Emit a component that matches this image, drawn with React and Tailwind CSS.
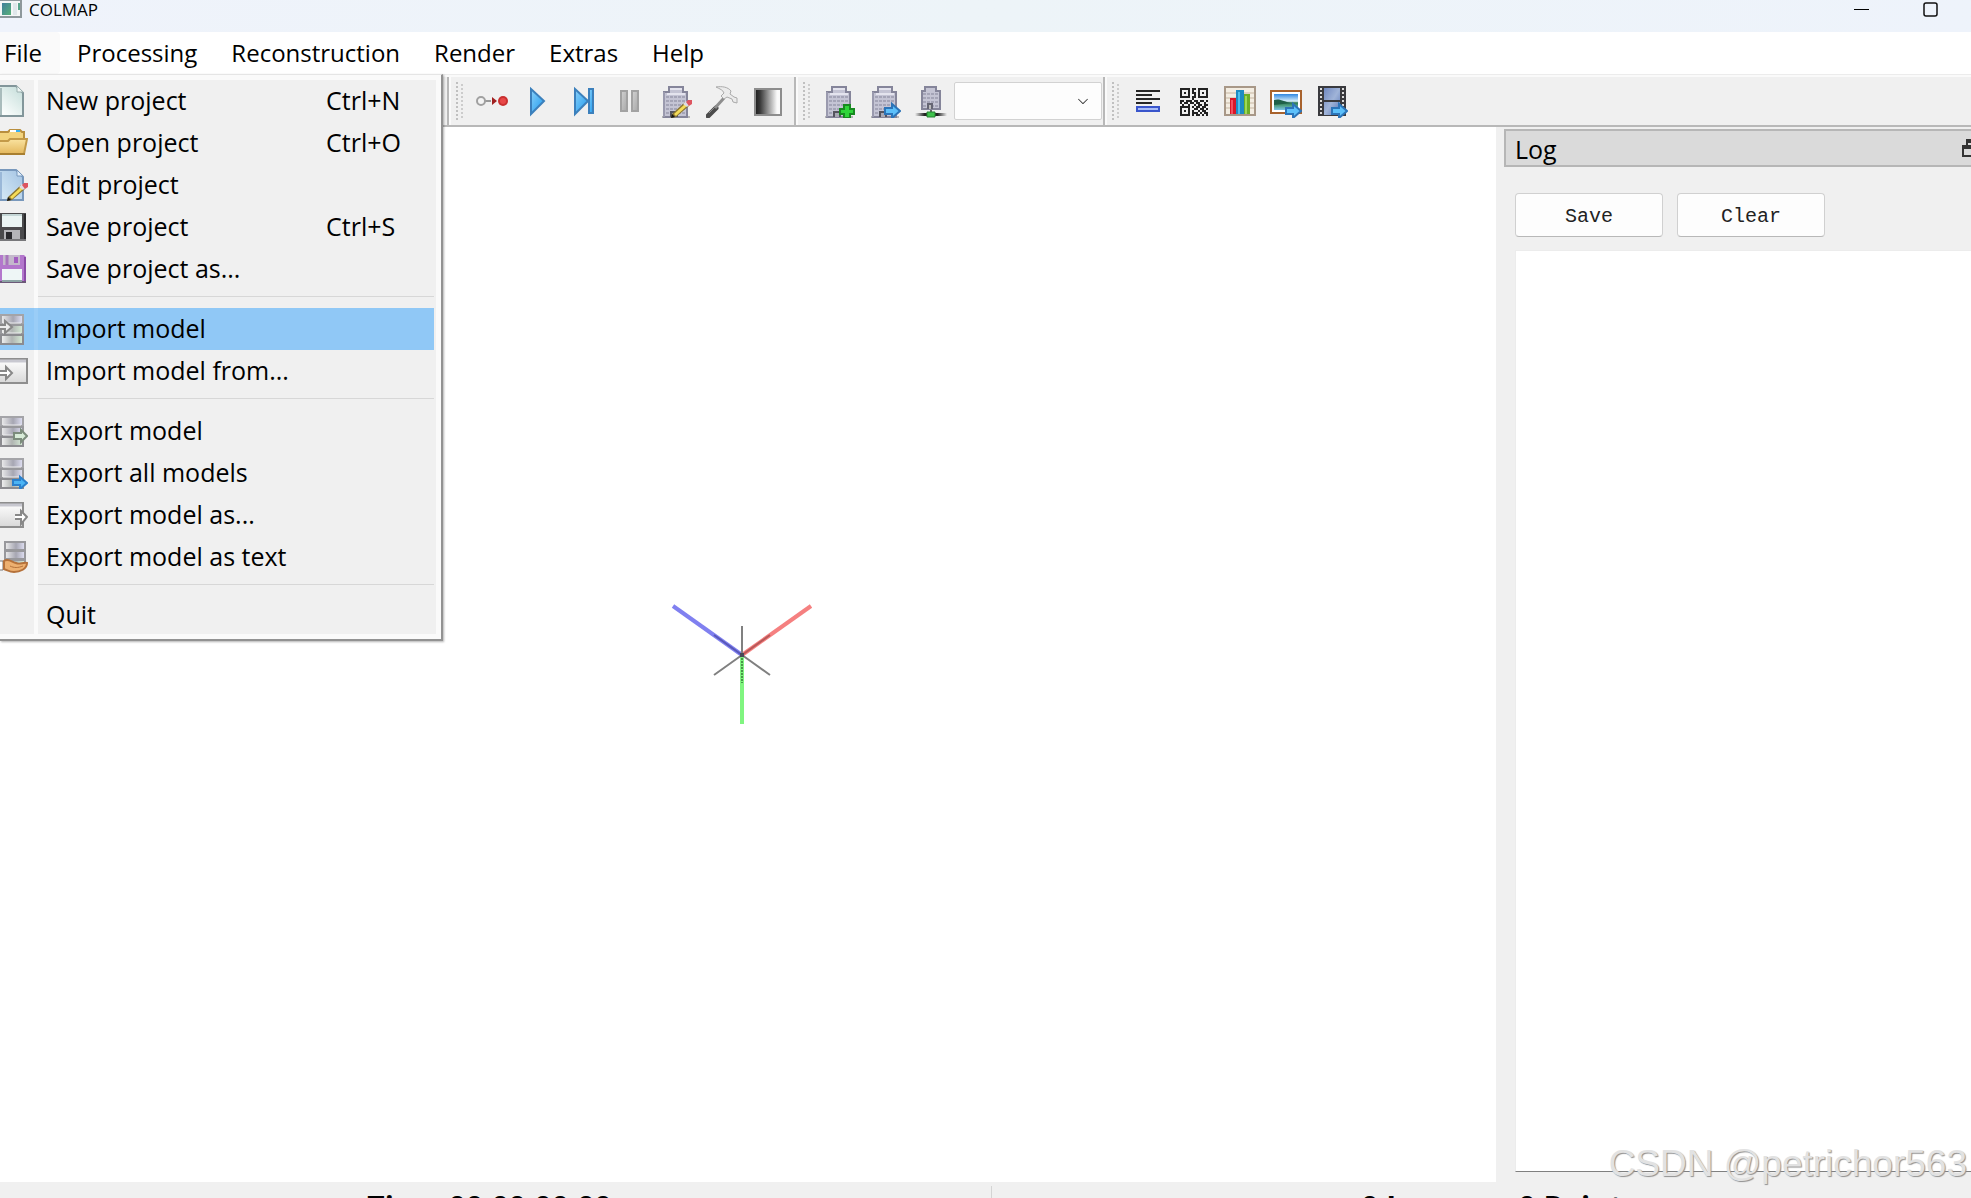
import { Fragment } from "react";
import { VscChevronDown } from "react-icons/vsc";

function Gradients() {
    return (
        <svg className="absolute h-0 w-0" aria-hidden="true">
            <defs>
                <linearGradient id="paper" x1="1" y1="0" x2="0.3" y2="1">
                    <stop offset="0" stopColor="#c2dcd8" />
                    <stop offset="1" stopColor="#fafdfc" />
                </linearGradient>
                <linearGradient id="bluePaper" x1="1" y1="0" x2="0" y2="1">
                    <stop offset="0" stopColor="#a3c3e3" />
                    <stop offset="1" stopColor="#d6eaf6" />
                </linearGradient>
                <linearGradient id="folder" x1="0" y1="0" x2="0" y2="1">
                    <stop offset="0" stopColor="#fae3a0" />
                    <stop offset="1" stopColor="#e3b75c" />
                </linearGradient>
                <linearGradient id="blueFill" x1="0" y1="0" x2="1" y2="1">
                    <stop offset="0" stopColor="#8ad0f8" />
                    <stop offset="1" stopColor="#1d9af0" />
                </linearGradient>
                <linearGradient id="drawer" x1="0" y1="0" x2="1" y2="0">
                    <stop offset="0" stopColor="#eeeeee" />
                    <stop offset="0.55" stopColor="#a6a6b2" />
                    <stop offset="1" stopColor="#e2e2f6" />
                </linearGradient>
                <linearGradient id="drawerGreen" x1="0" y1="0" x2="1" y2="0">
                    <stop offset="0" stopColor="#f4f4f4" />
                    <stop offset="0.5" stopColor="#b0b4b2" />
                    <stop offset="1" stopColor="#d6ecd6" />
                </linearGradient>
                <linearGradient id="windowFill" x1="0" y1="0" x2="0" y2="1">
                    <stop offset="0" stopColor="#ffffff" />
                    <stop offset="1" stopColor="#d8d8d8" />
                </linearGradient>
                <linearGradient id="gray" x1="0" y1="0" x2="1" y2="0">
                    <stop offset="0" stopColor="#1c1c1c" />
                    <stop offset="0.2" stopColor="#3a3a3a" />
                    <stop offset="0.85" stopColor="#fafafa" />
                </linearGradient>
                <linearGradient id="pauseFill" x1="0" y1="0" x2="1" y2="1">
                    <stop offset="0" stopColor="#d2d2d2" />
                    <stop offset="1" stopColor="#a8a8a8" />
                </linearGradient>
                <linearGradient id="sky" x1="0" y1="0" x2="0" y2="1">
                    <stop offset="0" stopColor="#2f86e0" />
                    <stop offset="0.45" stopColor="#d8effa" />
                    <stop offset="0.55" stopColor="#2d7a55" />
                    <stop offset="0.7" stopColor="#4a9a78" />
                    <stop offset="1" stopColor="#7cc4e8" />
                </linearGradient>
                <linearGradient id="film" x1="0" y1="0" x2="1" y2="1">
                    <stop offset="0" stopColor="#7088c0" />
                    <stop offset="0.5" stopColor="#a0b4d8" />
                    <stop offset="1" stopColor="#5674b8" />
                </linearGradient>
                <linearGradient id="shadowLine" x1="0" y1="0" x2="1" y2="0">
                    <stop offset="0" stopColor="#222" stopOpacity="0" />
                    <stop offset="0.3" stopColor="#222" />
                    <stop offset="0.7" stopColor="#222" />
                    <stop offset="1" stopColor="#222" stopOpacity="0" />
                </linearGradient>
                <linearGradient id="appTile" x1="0" y1="0" x2="1" y2="1">
                    <stop offset="0" stopColor="#3f7f9c" />
                    <stop offset="1" stopColor="#58b078" />
                </linearGradient>
            </defs>
        </svg>
    );
}

function Pencil() {
    return (
        <g>
            <path d="M12 28 L25 16 L29 20 L16 31 L11 32 Z" fill="#8a7430" />
            <path d="M14 28 L25 18 L27 20 L16 30 Z" fill="#f5dc58" />
            <path d="M23 18 L26 15 L30 18 L27 21 Z" fill="#dcdce4" />
            <path d="M26 16 L28 14 L32 14 L32 18 L29 20 Z" fill="#dd5560" />
            <path d="M11 32 L12 28 L15 31 Z" fill="#151515" />
        </g>
    );
}

function BlueArrow() {
    return (
        <path
            d="M16 22 H23 V18 L31 25 L23 32 V28 H16 Z"
            fill="#5cc0fa"
            stroke="#2b74b8"
            strokeWidth="2"
        />
    );
}

function Building() {
    return (
        <g>
            <path d="M2 31 H30" stroke="#b5b5b5" strokeWidth="2" />
            <path d="M9 1 H23 V6 H27 V31 H4 V6 H9 Z" fill="#c4c4d4" stroke="#85859a" strokeWidth="2" />
            <path d="M10 3 H22 M7 8 H25" stroke="#e4e4ee" strokeWidth="2" />
            <path
                d="M6 11 H26 M6 15 H26 M6 19 H26 M6 23 H26 M6 27 H26"
                stroke="#85859a"
                strokeWidth="1"
                strokeDasharray="3 1"
            />
            <path d="M4 6 V31" stroke="#9a9aae" strokeWidth="2" />
            <path d="M11 31 V26 H17 V31" fill="#a8a8b4" stroke="#55555f" strokeWidth="2" />
        </g>
    );
}

const qrRows = [
    "11111011011111",
    "10001010010001",
    "10101011010101",
    "10001001010001",
    "11111011011111",
    "00000010000000",
    "11011101101101",
    "10110110110010",
    "01001001011011",
    "11111010110110",
    "10001001101101",
    "10101010010110",
    "10001011101011",
    "11111010110101",
];

const toolIcons = {
    extract: (
        <g>
            <path d="M9 15 H15" stroke="#999" strokeWidth="2" />
            <circle cx="5" cy="15" r="4" fill="#f4f4f4" stroke="#a0a0a0" strokeWidth="2" />
            <path d="M16 11 L21 15 L16 19 Z" fill="#a02020" />
            <circle cx="27" cy="15" r="5" fill="#c93030" />
            <circle cx="27" cy="15" r="3" fill="#e84848" />
        </g>
    ),
    play: <path d="M9 3 L22 15 L9 28 Z" fill="url(#blueFill)" stroke="#3c80bc" strokeWidth="2" />,
    step: (
        <g fill="url(#blueFill)" stroke="#3c80bc" strokeWidth="2">
            <path d="M7 3 L20 15 L7 28 Z" />
            <path d="M21 3 H25 V27 H21 Z" />
        </g>
    ),
    pause: (
        <g fill="url(#pauseFill)" stroke="#a2a2a2" strokeWidth="2">
            <path d="M7 5 H13 V25 H7 Z" />
            <path d="M18 5 H24 V25 H18 Z" />
        </g>
    ),
    options: (
        <g>
            <Building />
            <Pencil />
        </g>
    ),
    hammer: (
        <g>
            <path d="M2 30 L10 22" stroke="#4c4c4c" strokeWidth="5" strokeLinecap="round" />
            <path d="M3 27 L9 21" stroke="#8b8b8b" strokeWidth="1" />
            <path d="M9 22 L18 12" stroke="#8e8e8e" strokeWidth="3" />
            <path
                d="M10 1 C16 0 22 1 25 5 L24 8 L28 11 L31 12 V17 L27 16 L26 13 L21 11 L18 13 L15 10 L18 7 C17 4 14 3 10 1 Z"
                fill="#ebebeb"
                stroke="#aaa"
                strokeWidth="1"
            />
        </g>
    ),
    gradient: <path d="M3 3 H29 V29 H3 Z" fill="url(#gray)" stroke="#8d8d8d" strokeWidth="2" />,
    add: (
        <g>
            <Building />
            <path
                d="M21 19 H27 V23 H31 V28 H27 V32 H21 V28 H17 V23 H21 Z"
                fill="#2fd53a"
                stroke="#178a20"
                strokeWidth="2"
            />
        </g>
    ),
    next: (
        <g>
            <Building />
            <BlueArrow />
        </g>
    ),
    network: (
        <g>
            <path d="M10 1 H21 V5 H25 V23 H7 V5 H10 Z" fill="#c4c4d4" stroke="#85859a" strokeWidth="2" />
            <path d="M8 8 H24 M8 12 H24 M8 16 H24 M8 20 H24" stroke="#85859a" strokeWidth="1" strokeDasharray="3 1" />
            <path d="M13 23 V18 H17 V23" fill="#bbb" stroke="#666674" strokeWidth="2" />
            <rect x="0" y="27" width="32" height="3" fill="url(#shadowLine)" />
            <path d="M16 24 V27" stroke="#666" strokeWidth="2" />
            <path d="M12 26 H20 V31 H12 Z" fill="#3fc24c" stroke="#258030" strokeWidth="1" />
        </g>
    ),
    log: (
        <g fill="none" strokeWidth="2">
            <path d="M4 5 H28 M4 9 H20 M4 13 H28 M4 17 H20" stroke="#262626" />
            <path d="M5 21 H27 V25 H5 Z" fill="#a9bdf8" stroke="#3a56cc" />
        </g>
    ),
    qr: (
        <g fill="#222" shapeRendering="crispEdges">
            {qrRows.map((row, y) =>
                row.split("").map((cell, x) =>
                    cell === "1" ? (
                        <rect key={`${x}-${y}`} x={2 + x * 2} y={2 + y * 2} width="2" height="2" />
                    ) : null
                )
            )}
        </g>
    ),
    stats: (
        <g>
            <path d="M1 1 H31 V29 H1 Z" fill="#f3ede2" stroke="#a89888" strokeWidth="2" />
            <path d="M2 7 H30 M2 12 H30 M2 17 H30 M2 22 H30" stroke="#ddd2c2" strokeWidth="2" />
            <path d="M6 12 H12 V28 H6 Z" fill="#d81828" />
            <path d="M12 4 H20 V28 H12 Z" fill="#1e8cc4" />
            <path d="M20 8 H26 V28 H20 Z" fill="#6cae28" />
            <path d="M8 14 V28" stroke="#f45060" strokeWidth="2" />
            <path d="M15 6 V28" stroke="#4cc0ee" strokeWidth="2" />
            <path d="M22 10 V28" stroke="#9cda58" strokeWidth="2" />
        </g>
    ),
    grab: (
        <g>
            <path d="M1 5 H31 V27 H1 Z" fill="#fff" stroke="#a8622c" strokeWidth="2" />
            <rect x="4" y="8" width="24" height="16" fill="url(#sky)" />
            <path d="M4 14 C10 12 14 16 22 17 L4 19 Z" fill="#1f6048" />
            <BlueArrow />
        </g>
    ),
    movie: (
        <g>
            <path d="M2 0 H30 V30 H2 Z" fill="#3a3a3e" />
            <path d="M5 2 V30 M27 2 V30" stroke="#dcdcdc" strokeWidth="2" strokeDasharray="2 2" />
            <path d="M8 2 H24 V14 H8 Z M8 16 H24 V29 H8 Z" fill="url(#film)" />
            <BlueArrow />
        </g>
    ),
};

function Drawers({ tint }) {
    return (
        <g stroke="#8c8c90" strokeWidth="2">
            <path d="M1 2 H23 V11 H1 Z" fill="url(#drawer)" stroke="#a4a4a8" />
            <path d="M1 12 H23 V21 H1 Z" fill={tint ? "url(#drawerGreen)" : "url(#drawer)"} stroke="#98989c" />
            <path d="M1 22 H23 V31 H1 Z" fill="url(#drawerGreen)" />
            <path d="M3 10 H21 M3 20 H21" stroke="#ececee" strokeWidth="1" />
        </g>
    );
}

const arrowIn = "M0 12 H5 V8 L12 14 L5 20 V16 H0";
const arrowOut = "M15 16 H21 V12 L27 18 L21 25 V20 H15";

// the window is cut at its left edge, so these show the right 28px of each 32px icon
const menuIcons = {
    newFile: (
        <g>
            <path d="M0 1 H16 L23 8 V31 H0" fill="url(#paper)" stroke="#82969a" strokeWidth="2" />
            <path d="M1 3 V30" stroke="#a9bcbc" strokeWidth="2" />
            <path d="M17 1 V7 H23 Z" fill="#eef6f4" stroke="#9cb0b0" strokeWidth="1" />
        </g>
    ),
    open: (
        <g>
            <path d="M0 5 H8 L10 3 H20 L22 5 H24 V14 H0" fill="#f3d47e" stroke="#b98f3e" strokeWidth="2" />
            <path d="M10 4 H16" stroke="#fff" strokeWidth="2" />
            <path d="M16 4 H20" stroke="#38b0f0" strokeWidth="2" />
            <path d="M0 14 H8 L10 12 H27 L24 27 H0" fill="url(#folder)" stroke="#c39a48" strokeWidth="2" />
            <path d="M0 27 H25" stroke="#a87f30" strokeWidth="2" />
        </g>
    ),
    edit: (
        <g>
            <path d="M0 1 H16 L23 8 V31 H0" fill="url(#bluePaper)" stroke="#7898bc" strokeWidth="2" />
            <path d="M17 1 V7 H23 Z" fill="#e0eefa" stroke="#7898bc" strokeWidth="1" />
            <path d="M1 3 V30" stroke="#9ab8d8" strokeWidth="2" />
            <svg x="-4" y="0" width="32" height="32" viewBox="0 0 32 32">
                <Pencil />
            </svg>
        </g>
    ),
    save: (
        <g>
            <path d="M0 2 H26 V29 H0 Z" fill="#4a4a4c" />
            <path d="M25 3 V28" stroke="#2a2a2c" strokeWidth="2" />
            <path d="M2 3 H22 V16 H2 Z" fill="#eaf4f3" />
            <path d="M2 4 H22" stroke="#c4d6d6" strokeWidth="2" />
            <path d="M4 19 H20 V28 H4 Z" fill="#b4b4b8" />
            <path d="M6 21 H12 V28 H6 Z" fill="#2a2a2e" />
            <path d="M0 29 H26" stroke="#77777a" strokeWidth="2" />
        </g>
    ),
    saveAs: (
        <g>
            <path d="M0 2 H24 L26 4 V29 H0 Z" fill="#b377cc" />
            <path d="M25 4 V29" stroke="#8a4aa6" strokeWidth="2" />
            <path d="M3 2 H20 V12 H3 Z" fill="#c4b8cc" />
            <path d="M7 2 V12" stroke="#a874bc" strokeWidth="3" />
            <path d="M14 4 H18 V10 H14 Z" fill="#a25cc0" />
            <path d="M2 16 H22 V28 H2 Z" fill="#eef6f6" />
            <path d="M0 29 H26" stroke="#6c5878" strokeWidth="2" />
            <path d="M2 28 H22" stroke="#8ca4a4" strokeWidth="2" />
        </g>
    ),
    importModel: (
        <g>
            <Drawers tint />
            <path d={arrowIn} fill="#ececec" stroke="#888" strokeWidth="2" />
        </g>
    ),
    importFrom: (
        <g>
            <path d="M0 4 H27 V28 H0" fill="url(#windowFill)" stroke="#8e8e8e" strokeWidth="2" />
            <path d="M0 6 H26" stroke="#c8c8d0" strokeWidth="3" />
            <path d="M0 16 H6 V12 L12 18 L6 24 V20 H0" fill="#fff" stroke="#888" strokeWidth="2" />
        </g>
    ),
    exportModel: (
        <g>
            <Drawers />
            <path d="M14 18 H21 V15 L27 21 L21 27 V24 H14 Z" fill="#d8ecd8" stroke="#7c8c7c" strokeWidth="2" />
        </g>
    ),
    exportAll: (
        <g>
            <Drawers />
            <path d="M13 23 H20 V20 L27 26 L20 32 V28 H13 Z" fill="#4bb4f4" stroke="#2b80cc" strokeWidth="2" />
        </g>
    ),
    exportAs: (
        <g>
            <path d="M0 4 H23 V28 H0" fill="url(#windowFill)" stroke="#8e8e8e" strokeWidth="2" />
            <path d="M0 6 H22" stroke="#c8c8d0" strokeWidth="3" />
            <path d={arrowOut} fill="#fff" stroke="#888" strokeWidth="2" />
        </g>
    ),
    exportText: (
        <g>
            <g stroke="#98989c" strokeWidth="2">
                <path d="M5 1 H25 V9 H5 Z" fill="url(#drawer)" />
                <path d="M5 10 H25 V18 H5 Z" fill="url(#drawer)" />
                <path d="M5 19 H25 V25 H5 Z" fill="url(#drawerGreen)" />
            </g>
            <path d="M0 20 H3 V29 H0" fill="#fff" stroke="#777" strokeWidth="1" />
            <path
                d="M4 20 C8 17 12 21 16 22 C20 24 23 21 27 22 C27 28 20 31 14 31 C10 31 7 29 4 28 Z"
                fill="#edb070"
                stroke="#b5713a"
                strokeWidth="2"
            />
            <path d="M10 25 C14 27 18 27 23 25" fill="none" stroke="#b5713a" strokeWidth="1" />
        </g>
    ),
};

const menuNames = ["File", "Processing", "Reconstruction", "Render", "Extras", "Help"];

const fileMenu = [
    [
        { label: "New project", icon: "newFile", keys: "Ctrl+N" },
        { label: "Open project", icon: "open", keys: "Ctrl+O" },
        { label: "Edit project", icon: "edit" },
        { label: "Save project", icon: "save", keys: "Ctrl+S" },
        { label: "Save project as...", icon: "saveAs" },
    ],
    [
        { label: "Import model", icon: "importModel", active: true },
        { label: "Import model from...", icon: "importFrom" },
    ],
    [
        { label: "Export model", icon: "exportModel" },
        { label: "Export all models", icon: "exportAll" },
        { label: "Export model as...", icon: "exportAs" },
        { label: "Export model as text", icon: "exportText" },
    ],
    [{ label: "Quit" }],
];

const runTools = [
    ["extract", "Feature extraction"],
    ["play", "Start reconstruction"],
    ["step", "Reconstruct next image"],
    ["pause", "Pause reconstruction"],
    ["options", "Reconstruction options"],
    ["hammer", "Bundle adjustment"],
    ["gradient", "Render options"],
];

const modelTools = [
    ["add", "Add model"],
    ["next", "Next model"],
    ["network", "Model network"],
];

const extraTools = [
    ["log", "Show log"],
    ["qr", "Match matrix"],
    ["stats", "Show model statistics"],
    ["grab", "Grab image"],
    ["movie", "Grab movie"],
];

function TitleBar() {
    return (
        <header className="flex h-8 shrink-0 items-start bg-linear-to-r from-[#eff3fb] via-[#edf4f8] to-[#eef3fb]">
            <svg width="22" height="18" viewBox="0 0 22 18" aria-hidden="true">
                <path d="M0 0 H21 V17 H0" fill="#f4f6f6" stroke="#8e989c" strokeWidth="2" />
                <rect x="2" y="3" width="9" height="12" fill="url(#appTile)" />
                <rect x="13" y="3" width="4" height="12" fill="#dfe7ea" />
                <rect x="18" y="3" width="2" height="7" fill="#5aa68c" />
            </svg>
            <h1 className="pl-[7px] text-[17px] leading-5 font-normal">COLMAP</h1>
            <div className="ml-auto flex gap-[54px] pr-[33px]">
                <button aria-label="Minimize">
                    <svg width="15" height="18" viewBox="0 0 15 18">
                        <path d="M0 9.5 H15" stroke="#000" strokeWidth="1" />
                    </svg>
                </button>
                <button aria-label="Maximize">
                    <svg width="15" height="18" viewBox="0 0 15 18">
                        <rect x="1" y="3" width="13" height="13" rx="2" fill="none" stroke="#111" strokeWidth="1.5" />
                    </svg>
                </button>
            </div>
        </header>
    );
}

function FileMenu() {
    return (
        <div
            role="menu"
            aria-label="File"
            className="absolute top-[42px] left-0 z-10 w-[443px] border-t border-r-2 border-b-2 border-t-[#e5e5e5] border-r-[#929292] border-b-[#929292] bg-[#fafafa] py-[5px] pr-[5px] text-[25px] shadow-[1px_1px_2px_rgba(0,0,0,0.3)]"
        >
            {fileMenu.map((group, index) => (
                <Fragment key={index}>
                    {index > 0 && (
                        <div role="separator" className="flex h-[18px] bg-[#f0f0f0]">
                            <div className="w-[38px] border-r-4 border-[#fafafa]" />
                            <div className="mt-[6px] mr-[2px] h-px flex-1 bg-[#d7d7d7]" />
                        </div>
                    )}
                    {group.map((item) => (
                        <div key={item.label} className="bg-[#f0f0f0] pr-[2px]">
                            <button
                                role="menuitem"
                                className={`flex w-full items-center text-left ${
                                    item.icon ? "h-[42px]" : "h-[38px]"
                                } ${item.active ? "bg-[#90c8f6]" : ""}`}
                            >
                                <span
                                    className={`flex w-[38px] items-center self-stretch border-r-4 ${
                                        item.active ? "border-[#9acdf7]" : "border-[#fafafa]"
                                    }`}
                                >
                                    {item.icon && (
                                        <svg width="28" height="32" viewBox="0 0 28 32" aria-hidden="true">
                                            {menuIcons[item.icon]}
                                        </svg>
                                    )}
                                </span>
                                <span className="flex-1 pb-[2px] pl-2">{item.label}</span>
                                {item.keys && <span className="w-[108px] pb-[2px]">{item.keys}</span>}
                            </button>
                        </div>
                    ))}
                </Fragment>
            ))}
        </div>
    );
}

function MenuBar() {
    return (
        <nav className="relative flex h-[43px] shrink-0 items-stretch border-b border-[#ececec] bg-white text-[24px]">
            {menuNames.map((name) => (
                <button
                    key={name}
                    className={name === "File" ? "w-[60px] rounded-r bg-[#fafafa] pl-1 text-left" : "px-[17px]"}
                >
                    {name}
                </button>
            ))}
            <FileMenu />
        </nav>
    );
}

function Grip() {
    return (
        <svg width="7" height="38" viewBox="0 0 7 38" className="shrink-0" aria-hidden="true">
            <path d="M1 0 V38" stroke="#c0c0c0" strokeWidth="2" strokeDasharray="2 2" />
            <path d="M6 2 V38" stroke="#cccccc" strokeWidth="2" strokeDasharray="2 2" />
        </svg>
    );
}

function ToolGroup({ tools, label, children, last }) {
    return (
        <div
            role="toolbar"
            aria-label={label}
            className={`flex items-center border-l-2 border-l-[#fafafa] pl-[5px] ${
                last ? "flex-1" : "border-r-2 border-r-[#b8b8b8]"
            }`}
        >
            <Grip />
            <div className="flex gap-[14px] pt-[2px] pl-[13px]">
                {tools.map(([icon, name]) => (
                    <button key={icon} aria-label={name}>
                        <svg width="32" height="32" viewBox="0 0 32 32">
                            {toolIcons[icon]}
                        </svg>
                    </button>
                ))}
            </div>
            {children}
        </div>
    );
}

function ToolBars() {
    return (
        <div className="flex h-[52px] shrink-0 border-t-2 border-b-2 border-t-[#fafafa] border-b-[#b8b8b8] bg-[#f0f0f0]">
            <div className="w-[449px] border-r-2 border-[#b8b8b8]" />
            <ToolGroup tools={runTools} label="Reconstruction">
                <div className="w-[10px]" />
            </ToolGroup>
            <ToolGroup tools={modelTools} label="Models">
                <div className="relative mr-px ml-[7px] flex items-center">
                    <select
                        aria-label="Model"
                        className="h-[38px] w-[148px] appearance-none rounded-xs border border-[#d2d2d2] bg-[#fdfdfd]"
                    />
                    <VscChevronDown className="pointer-events-none absolute right-[11px]" size={16} color="#333" />
                </div>
            </ToolGroup>
            <ToolGroup tools={extraTools} label="Extras" last />
        </div>
    );
}

function Viewer() {
    return (
        <main className="flex flex-1 items-center justify-center bg-white pr-3">
            <svg width="144" height="140" viewBox="-72 -70 144 140" role="img" aria-label="Coordinate axes">
                <path d="M0 0 L69 -49" stroke="#f58080" strokeWidth="4" />
                <path d="M0 0 L-69 -49" stroke="#8080f0" strokeWidth="4" />
                <path d="M0 0 V69" stroke="#80f580" strokeWidth="4" />
                <path d="M0 0 L28 -20" stroke="#b85858" strokeWidth="2" />
                <path d="M0 0 L-28 -20" stroke="#5858b8" strokeWidth="2" />
                <path d="M0 0 V28" stroke="#489848" strokeWidth="2" strokeDasharray="2 1" />
                <path d="M0 0 V-29 M0 0 L-28 20 M0 0 L28 20" stroke="#808080" strokeWidth="2" />
                <rect x="-2" y="-2" width="4" height="4" fill="#484858" />
            </svg>
        </main>
    );
}

function LogDock() {
    return (
        <aside className="flex w-[475px] shrink-0 flex-col pt-[2px] pb-[10px] pl-2">
            <div className="flex h-[38px] shrink-0 items-center border-2 border-r-0 border-[#b6b6b6] bg-[#dadada] pl-[9px]">
                <h2 className="flex-1 pt-[2px]">Log</h2>
                <button aria-label="Float panel">
                    <svg width="9" height="20" viewBox="0 0 9 20">
                        <path d="M9 2 H5 V8 M9 8 H1 V18 H9" fill="none" stroke="#333" strokeWidth="2" />
                        <path d="M4 3 H9 M0 9 H9" stroke="#333" strokeWidth="4" />
                    </svg>
                </button>
            </div>
            <div className="flex gap-[14px] pt-[26px] pl-[11px] font-['Liberation_Mono',monospace] text-[20px]">
                {["Save", "Clear"].map((name) => (
                    <button
                        key={name}
                        className="h-11 w-[148px] rounded border border-[#d0d0d0] border-b-[#b8b8b8] bg-[#fdfdfd] pt-1 text-[#222]"
                    >
                        {name}
                    </button>
                ))}
            </div>
            <textarea
                aria-label="Log output"
                readOnly
                className="mt-[13px] ml-[11px] flex-1 resize-none border-t border-b border-l border-[#ececec] border-b-[#808080] bg-white outline-none"
            />
        </aside>
    );
}

function StatusBar() {
    return (
        <footer className="flex h-4 shrink-0 items-start overflow-hidden pt-1 text-[30px] font-bold">
            <div className="flex-1 pt-[5px] pr-3 text-center">Time 00:00:00:00</div>
            <div className="h-full w-px bg-[#d4d4d4]" />
            <div className="w-[979px] pt-[5px] pl-9 text-center">0 Images - 0 Points</div>
        </footer>
    );
}

function App() {
    return (
        <div className="relative flex h-screen flex-col overflow-hidden bg-[#f0f0f0] font-['Open_Sans',sans-serif] text-[25px] leading-8 text-black">
            <Gradients />
            <TitleBar />
            <MenuBar />
            <ToolBars />
            <div className="flex min-h-0 flex-1">
                <Viewer />
                <LogDock />
            </div>
            <StatusBar />
            <div className="pointer-events-none absolute right-1 bottom-[14px] font-['Liberation_Sans',sans-serif] text-[37px] leading-10 text-[#e2e2e2] [text-shadow:1px_1px_1px_#909090]">
                CSDN @petrichor563
            </div>
        </div>
    );
}

export default App;
